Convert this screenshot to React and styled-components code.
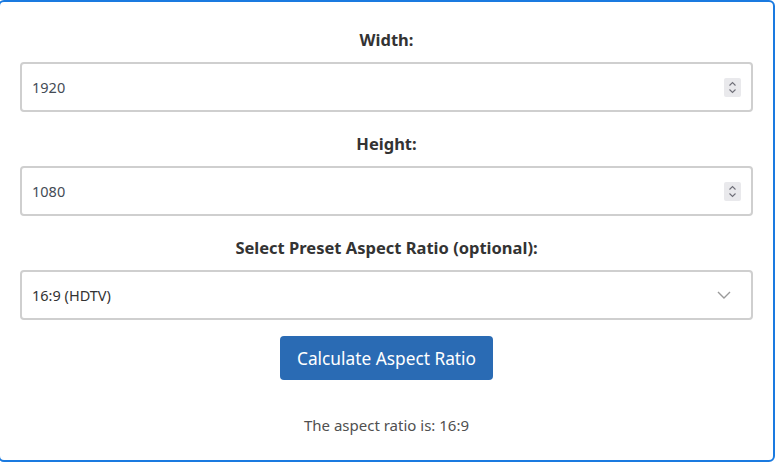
import React, { useState } from "react";
import styled, { createGlobalStyle } from "styled-components";

const Global = createGlobalStyle`
  html, body { margin: 0; padding: 0; background: #fff; }
  body { font-family: "Noto Sans", "Open Sans", sans-serif; overflow: hidden; }
  * { box-sizing: border-box; }
`;

const Card = styled.div`
  margin-left: -2px;
  width: 777px;
  height: 462px;
  border: 2px solid #1a7ae0;
  border-radius: 6px;
  padding: 24px 20px 0 20px;
  display: flex;
  flex-direction: column;
  align-items: stretch;
`;

const Field = styled.div`
  display: flex;
  flex-direction: column;
  margin-bottom: ${(p) => p.$gap}px;
`;

const Label = styled.label`
  text-align: center;
  font-weight: 700;
  font-size: 16.5px;
  line-height: 24px;
  color: #333;
  padding-top: 2px;
  margin-bottom: 10px;
`;

const InputBox = styled.div`
  height: 50px;
  border: 2px solid #cfcfcf;
  border-radius: 4px;
  display: flex;
  align-items: center;
  padding: 0 10px 0 10px;
  background: #fff;
`;

const Input = styled.input`
  flex: 1;
  border: none;
  outline: none;
  font-family: inherit;
  font-size: 14.5px;
  color: #444b55;
  background: transparent;
  padding: 0;
  &::-webkit-inner-spin-button,
  &::-webkit-outer-spin-button { -webkit-appearance: none; margin: 0; }
  -moz-appearance: textfield;
`;

const Spinner = styled.span`
  width: 17px;
  height: 19px;
  background: #e9e9ec;
  border-radius: 2px;
  display: flex;
  align-items: center;
  justify-content: center;
`;

const Select = styled.select`
  flex: 1;
  border: none;
  outline: none;
  appearance: none;
  -webkit-appearance: none;
  font-family: inherit;
  font-size: 14.5px;
  color: #333;
  background: transparent;
  padding: 0;
`;

const Chevron = styled.span`
  display: flex;
  margin-right: 10px;
`;

const ButtonRow = styled.div`
  display: flex;
  justify-content: center;
`;

const Button = styled.button`
  width: 213px;
  height: 44px;
  border: none;
  border-radius: 4px;
  background: #2a6bb4;
  color: #fff;
  font-family: inherit;
  font-size: 17.3px;
  cursor: pointer;
`;

const Result = styled.p`
  margin: 34px 0 0 0;
  text-align: center;
  font-size: 15px;
  line-height: 22px;
  color: #505050;
`;

function SpinIcon() {
  return (
    <Spinner>
      <svg width="9" height="13" viewBox="0 0 9 13" fill="none" stroke="#6f6f78" strokeWidth="1.1">
        <path d="M1.5 4.5 L4.5 1.5 L7.5 4.5" />
        <path d="M1.5 8.5 L4.5 11.5 L7.5 8.5" />
      </svg>
    </Spinner>
  );
}

export default function App() {
  const [w, setW] = useState("1920");
  const [h, setH] = useState("1080");
  const [preset, setPreset] = useState("16:9");
  return (
    <>
      <Global />
      <Card>
        <Field $gap={18}>
          <Label>Width:</Label>
          <InputBox>
            <Input type="number" value={w} onChange={(e) => setW(e.target.value)} />
            <SpinIcon />
          </InputBox>
        </Field>
        <Field $gap={18}>
          <Label>Height:</Label>
          <InputBox>
            <Input type="number" value={h} onChange={(e) => setH(e.target.value)} />
            <SpinIcon />
          </InputBox>
        </Field>
        <Field $gap={16}>
          <Label>Select Preset Aspect Ratio (optional):</Label>
          <InputBox>
            <Select value={preset} onChange={(e) => setPreset(e.target.value)}>
              <option value="">Custom</option>
              <option value="16:9">16:9 (HDTV)</option>
              <option value="4:3">4:3 (Standard)</option>
              <option value="21:9">21:9 (Ultrawide)</option>
              <option value="1:1">1:1 (Square)</option>
            </Select>
            <Chevron>
              <svg width="14" height="8" viewBox="0 0 14 8" fill="none" stroke="#9a9a9a" strokeWidth="1.4">
                <path d="M1 1 L7 7 L13 1" />
              </svg>
            </Chevron>
          </InputBox>
        </Field>
        <ButtonRow>
          <Button>Calculate Aspect Ratio</Button>
        </ButtonRow>
        <Result>The aspect ratio is: 16:9</Result>
      </Card>
    </>
  );
}
